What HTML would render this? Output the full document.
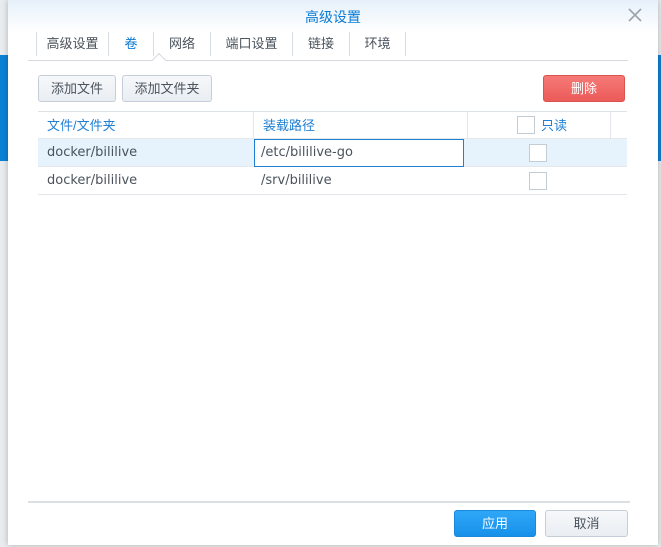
<!DOCTYPE html>
<html><head><meta charset="utf-8"><style>
*{box-sizing:border-box;margin:0;padding:0}
body{width:661px;height:547px;overflow:hidden;background:#e9ecef;font-family:"Liberation Sans","Noto Sans CJK SC",sans-serif;font-size:13px;color:#4a535c;position:relative}
.lat{font-family:"DejaVu Sans","Noto Sans CJK SC",sans-serif;font-size:13px}
.bgblue{position:absolute;top:55px;height:106px;background:#0b82d6}
.dlg{position:absolute;left:8px;top:0;width:650px;height:545px;background:#fff;box-shadow:0 0 6px rgba(0,0,0,.25)}
.hd{position:absolute;left:0;top:0;width:650px;height:32px;background:linear-gradient(#e6f0fa,#fff)}
.title{position:absolute;left:0;width:650px;top:7px;text-align:center;color:#0a7bd5;font-size:14px}
.x{position:absolute;right:16px;top:8px;width:14px;height:14px}
.tabs{position:absolute;left:20px;top:32px;width:600px;height:29px;border-bottom:1px solid #d6dadf}
.tab{position:absolute;top:0;height:24px;line-height:24px;border-left:1px solid #d8dde2;text-align:center;color:#4a535c}
.btn{position:absolute;height:27px;line-height:25px;border:1px solid #c5ced8;border-radius:3px;background:linear-gradient(#f6f8fa,#e9eef3);text-align:center;color:#4a535c}
.tbl{position:absolute;left:30px;top:111px;width:589px}
.row{position:absolute;left:0;width:589px;height:28px;border-bottom:1px solid #e3e7eb}
.c{position:absolute;top:0;height:27px;line-height:27px;padding-left:9px}
.cb{position:absolute;width:18px;height:18px;border:1px solid #c3cbd3;background:#fff}
</style></head><body>
<div class="bgblue" style="left:0;width:8px"></div>
<div class="bgblue" style="left:658px;width:3px"></div>
<div class="dlg">
<div class="hd"><div class="title">高级设置</div>
<svg class="x" viewBox="0 0 14 14"><path d="M1 1L13 13M13 1L1 13" stroke="#9aa1a8" stroke-width="1.6"/></svg></div>
<div class="tabs">
<div class="tab" style="left:8px;width:72px">高级设置</div>
<div class="tab" style="left:80px;width:45px;color:#0a7bd5">卷</div>
<div class="tab" style="left:125px;width:57px">网络</div>
<div class="tab" style="left:182px;width:82px">端口设置</div>
<div class="tab" style="left:264px;width:57px">链接</div>
<div class="tab" style="left:321px;width:57px;border-right:1px solid #d8dde2">环境</div>
<div style="position:absolute;left:126px;top:23px;width:10px;height:10px;background:#fff;border-left:1px solid #d6dadf;border-top:1px solid #d6dadf;transform:rotate(45deg)"></div>
</div>
<div class="btn" style="left:30px;top:75px;width:78px">添加文件</div>
<div class="btn" style="left:114px;top:75px;width:90px">添加文件夹</div>
<div class="btn" style="left:535px;top:75px;width:82px;border-color:#d9534f;background:linear-gradient(#f67a78,#eb5b59);color:#fff">删除</div>
<div class="tbl">
<div class="row" style="top:0;border-top:1px solid #dde2e7;color:#1f7fd4">
<div class="c" style="left:0">文件/文件夹</div>
<div class="c" style="left:215px;border-left:1px solid #e3e7eb">装载路径</div>
<div class="c" style="left:429px;width:144px;border-left:1px solid #e3e7eb;border-right:1px solid #e3e7eb"><span class="cb" style="left:49px;top:4px"></span><span style="position:absolute;left:73px">只读</span></div>
</div>
<div class="row lat" style="top:28px;background:#e6f2fc">
<div class="c" style="left:0">docker/bililive</div>
<div class="c" style="left:216px;top:0;width:210px;height:28px;border:1px solid #1f7fd4;background:#fff;line-height:26px;padding-left:6px">/etc/bililive-go</div>
<span class="cb" style="left:491px;top:5px"></span>
</div>
<div class="row lat" style="top:56px">
<div class="c" style="left:0">docker/bililive</div>
<div class="c" style="left:215px;padding-left:8px">/srv/bililive</div>
<span class="cb" style="left:491px;top:5px"></span>
</div>
</div>
<div style="position:absolute;left:20px;top:501px;width:602px;height:2px;background:#dcdfe2"></div>
<div class="btn" style="left:446px;top:510px;width:82px;border-color:#1a88db;background:linear-gradient(#2fa7f8,#1790ea);color:#fff">应用</div>
<div class="btn" style="left:537px;top:510px;width:83px">取消</div>
</div>
</body></html>
